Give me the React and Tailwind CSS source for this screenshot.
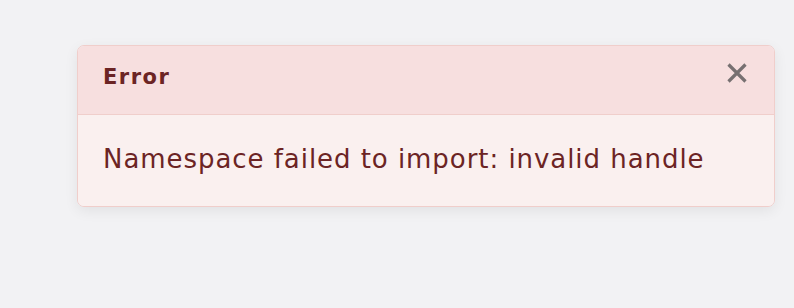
export default function App() {
  return (
    <div className="w-[794px] h-[308px] bg-[#f2f2f4] pt-[45px] pl-[77px] font-['DejaVu_Sans',sans-serif]">
      <div className="w-[698px] rounded-[7px] border-[1.5px] border-[#f0cecb] overflow-hidden shadow-[0_4px_14px_rgba(0,0,0,0.07)]">
        <div className="h-[69px] bg-[#f7dfdf] border-b border-[#f0cecb] flex items-start justify-between pl-[25px] pr-[27px] pt-[21px]">
          <span className="text-[21px] leading-[21px] font-bold tracking-[1.5px] text-[#6c2424]">Error</span>
          <button className="mt-[-4px] text-[#777071]" aria-label="Close">
            <svg width="20" height="20" viewBox="0 0 20 20" className="block">
              <path d="M1.5 1.5 L18.5 18.5 M18.5 1.5 L1.5 18.5" stroke="currentColor" strokeWidth="3.2" strokeLinecap="butt" />
            </svg>
          </button>
        </div>
        <div className="bg-[#faf0ef] pt-[31px] pb-[34px] pl-[25px]">
          <p className="text-[26px] leading-[26px] tracking-[0.95px] text-[#6c2424] whitespace-nowrap">
            Namespace failed to import: invalid handle
          </p>
        </div>
      </div>
    </div>
  );
}
